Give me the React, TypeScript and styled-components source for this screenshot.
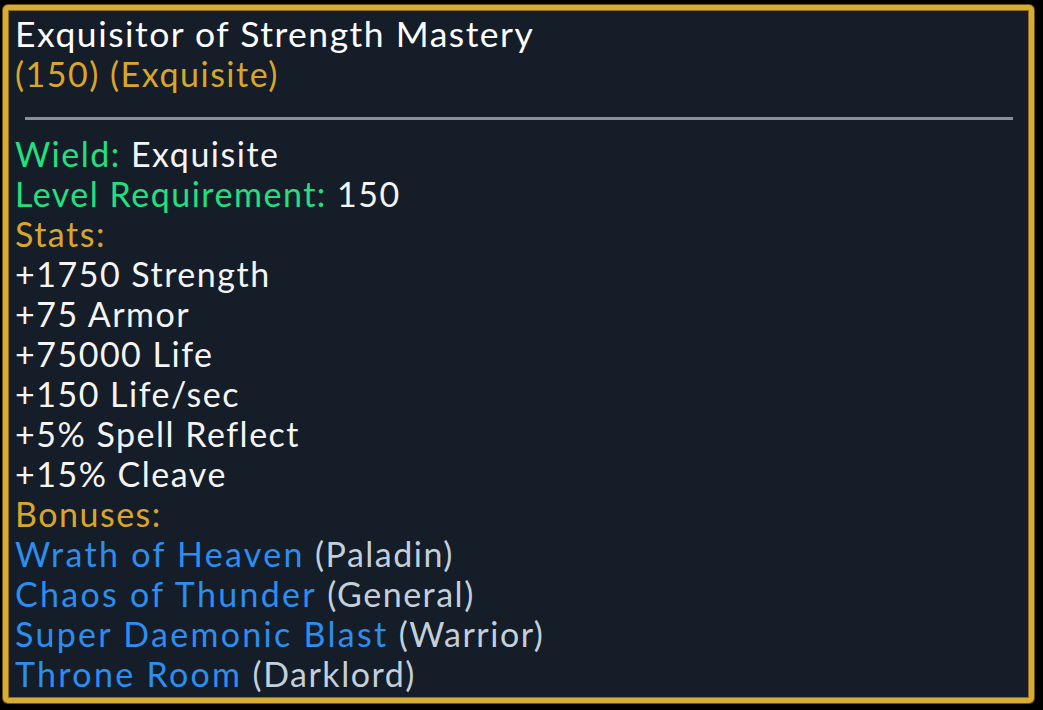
import React from "react";
import styled, { createGlobalStyle } from "styled-components";

const Global = createGlobalStyle`
  html, body { margin: 0; padding: 0; background: #000; }
  body { font-family: Lato, "Open Sans", sans-serif; }
`;

const Page = styled.div`
  padding: 5px 0 0 3px;
  width: 1043px;
  height: 710px;
  box-sizing: border-box;
  background: #000;
`;

const Tooltip = styled.div`
  width: 1031px;
  box-sizing: border-box;
  border: 5px solid #d6ab36;
  border-radius: 5px;
  background: #151d28;
  box-shadow: inset 0 0 0 1px #8e6c1c, 0 0 0 1px #6e5212;
  padding: 4px 7px 4px 7px;
  display: flex;
  flex-direction: column;
`;

const Line = styled.div<{ $size?: number }>`
  font-size: ${(p) => p.$size ?? 34}px;
  letter-spacing: 1.5px;
  line-height: 40px;
  height: 40px;
  white-space: nowrap;
  color: #f2f2f2;
`;

const Span = styled.span<{ $c: string; $ls?: number }>`
  color: ${(p) => p.$c};
  ${(p) => (p.$ls ? `letter-spacing: ${p.$ls}px;` : "")}
`;

const Divider = styled.div`
  height: 3px;
  background: #8c8f96;
  margin: 23px 9px 14px 10px;
`;

const GOLD = "#d9a62a";
const GREEN = "#22e07f";
const BLUE = "#2b8ef0";
const PAREN = "#c3cfdb";
const WHITE = "#f4f4f4";

const stats = [
  "+1750 Strength",
  "+75 Armor",
  "+75000 Life",
  "+150 Life/sec",
  "+5% Spell Reflect",
  "+15% Cleave",
];

const bonuses: [string, string][] = [
  ["Wrath of Heaven", "(Paladin)"],
  ["Chaos of Thunder", "(General)"],
  ["Super Daemonic Blast", "(Warrior)"],
  ["Throne Room", "(Darklord)"],
];

export default function App() {
  return (
    <Page>
      <Global />
      <Tooltip>
        <Line $size={35.5}>
          <Span $c="#ffffff">Exquisitor of Strength Mastery</Span>
        </Line>
        <Line>
          <Span $c={GOLD}>(150) (Exquisite)</Span>
        </Line>
        <Divider />
        <Line>
          <Span $c={GREEN}>Wield:</Span> <Span $c={WHITE}>Exquisite</Span>
        </Line>
        <Line>
          <Span $c={GREEN}>Level Requirement:</Span> <Span $c={WHITE}>150</Span>
        </Line>
        <Line>
          <Span $c={GOLD}>Stats:</Span>
        </Line>
        {stats.map((s) => (
          <Line key={s}>
            <Span $c={WHITE}>{s}</Span>
          </Line>
        ))}
        <Line>
          <Span $c={GOLD}>Bonuses:</Span>
        </Line>
        {bonuses.map(([n, c]) => (
          <Line key={n}>
            <Span $c={BLUE} $ls={2.3}>{n}</Span> <Span $c={PAREN}>{c}</Span>
          </Line>
        ))}
      </Tooltip>
    </Page>
  );
}
